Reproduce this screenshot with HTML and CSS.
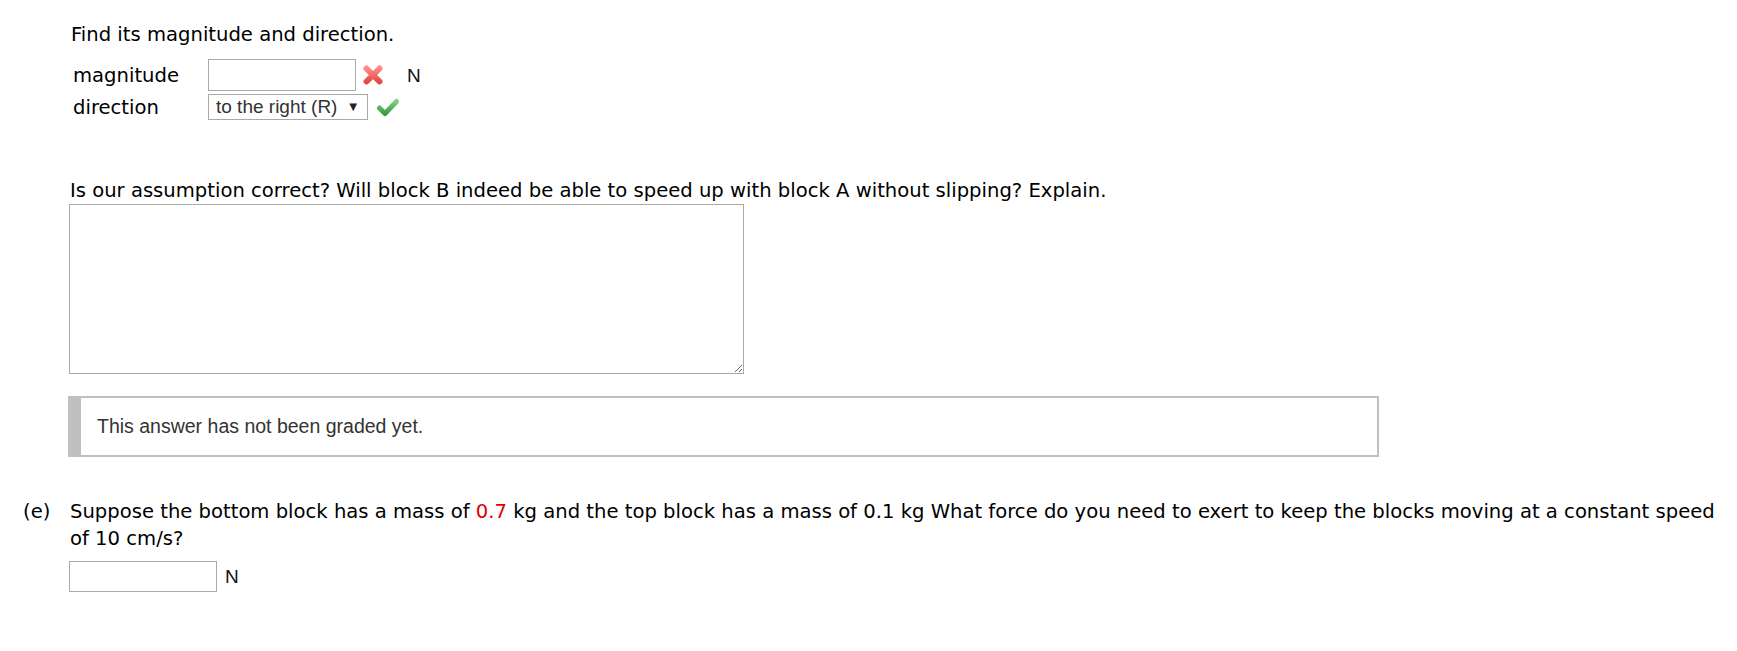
FILE: index.html
```html
<!DOCTYPE html>
<html lang="en">

<head>
    <meta charset="UTF-8">
    <meta name="viewport" content="width=device-width, initial-scale=1.0">
    <title>Question</title>
    <link rel="stylesheet" href="styles.css">
</head>

<body>
    <div class="part">
        <p class="prompt first">Find its magnitude and direction.</p>
        <div class="answer-grid">
            <span class="label">magnitude</span>
            <div class="field">
                <input type="text" class="num-input">
                <svg class="mark wrong" width="22" height="20" viewBox="0 0 22 20">
                    <defs>
                        <linearGradient id="red" x1="0" y1="0" x2="0" y2="1">
                            <stop offset="0" stop-color="#ff8a8a"/>
                            <stop offset="1" stop-color="#e94848"/>
                        </linearGradient>
                    </defs>
                    <path d="M4.5 3.5 L17.5 16.5 M17.5 3.5 L4.5 16.5" stroke="url(#red)" stroke-width="6" stroke-linecap="round" fill="none"/>
                </svg>
                <span class="unit">N</span>
            </div>
            <span class="label">direction</span>
            <div class="field">
                <div class="select-box">to the right (R) <span class="arrow">&#9660;</span></div>
                <svg class="mark right" width="24" height="20" viewBox="0 0 24 20">
                    <defs>
                        <linearGradient id="green" x1="0" y1="0" x2="0" y2="1">
                            <stop offset="0" stop-color="#7fcf7f"/>
                            <stop offset="1" stop-color="#3f9a3f"/>
                        </linearGradient>
                    </defs>
                    <path d="M3.5 11 L9 16.5 L20.5 4.5" stroke="url(#green)" stroke-width="5" stroke-linecap="round" stroke-linejoin="round" fill="none"/>
                </svg>
            </div>
        </div>

        <p class="prompt explain">Is our assumption correct? Will block B indeed be able to speed up with block A without slipping? Explain.</p>
        <textarea class="essay"></textarea>

        <div class="grade-note">This answer has not been graded yet.</div>
    </div>

    <div class="question">
        <span class="q-label">(e)</span>
        <div class="q-body">
            <p class="q-text">Suppose the bottom block has a mass of <span class="given">0.7</span> kg and the top block has a mass of 0.1 kg What force do you need to exert to keep the blocks moving at a constant speed of 10 cm/s?</p>
            <div class="field">
                <input type="text" class="num-input short">
                <span class="unit">N</span>
            </div>
        </div>
    </div>
</body>

</html>
```

FILE: styles.css
```css
body {
    margin: 0;
    padding: 0;
    font-family: "DejaVu Sans", sans-serif;
    font-size: 19.6px;
    line-height: 27px;
    color: #000;
    background: #fff;
}

p {
    margin: 0;
}

.part {
    padding-left: 70px;
}

.prompt.first {
    padding-top: 21px;
    padding-left: 1px;
}

.answer-grid {
    display: grid;
    grid-template-columns: 135px auto;
    grid-template-rows: 32px 26px;
    row-gap: 3px;
    margin-top: 11px;
    margin-left: 3px;
    align-items: center;
}

.label {
    line-height: 27px;
}

.field {
    display: flex;
    align-items: center;
}

.num-input {
    box-sizing: border-box;
    width: 148px;
    height: 32px;
    margin: 0;
    border: 1px solid #a9a9a9;
    padding: 2px 4px;
    font-size: 16px;
}

.num-input.short {
    height: 31px;
}

.mark.wrong {
    margin-left: 6px;
}

.mark.right {
    margin-left: 8px;
}

.unit {
    font-family: "Liberation Sans", Arial, sans-serif;
    font-size: 19px;
    color: #111;
}

.mark.wrong + .unit {
    margin-left: 23px;
}

.num-input + .unit {
    margin-left: 8px;
}

.select-box {
    box-sizing: border-box;
    width: 160px;
    height: 26px;
    border: 1px solid #a9a9a9;
    padding-left: 7px;
    font-family: "Liberation Sans", Arial, sans-serif;
    font-size: 19px;
    line-height: 24px;
    color: #333;
    white-space: nowrap;
}

.arrow {
    font-size: 13px;
    margin-left: 4px;
    vertical-align: 2px;
    color: #222;
}

.prompt.explain {
    margin-top: 57px;
}

.essay {
    display: block;
    box-sizing: border-box;
    width: 675px;
    height: 170px;
    margin: 0 0 0 -1px;
    border: 1px solid #a9a9a9;
    padding: 2px;
    resize: both;
}

.grade-note {
    box-sizing: border-box;
    width: 1311px;
    height: 61px;
    margin: 22px 0 0 -2px;
    border: 2px solid #c0c0c0;
    border-left-width: 13px;
    padding-left: 16px;
    font-family: "Liberation Sans", Arial, sans-serif;
    font-size: 19.5px;
    line-height: 57px;
    color: #333;
}

.question {
    display: grid;
    grid-template-columns: 47px 1fr;
    padding-left: 23px;
    padding-top: 41px;
    padding-right: 10px;
}

.given {
    color: #e00000;
}

.q-body .field {
    margin-top: 9px;
    margin-left: -1px;
}
```
